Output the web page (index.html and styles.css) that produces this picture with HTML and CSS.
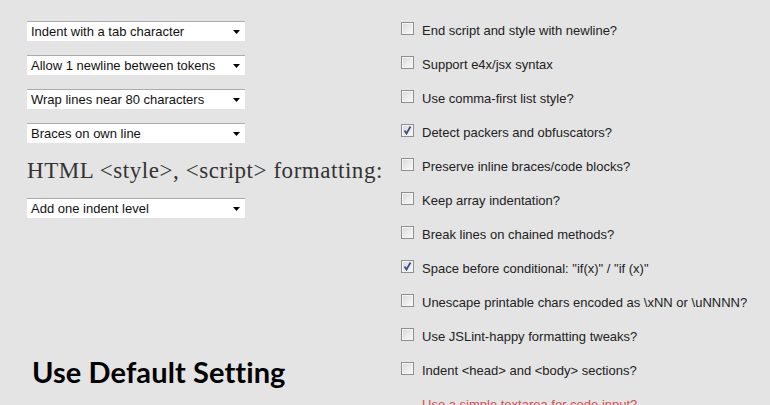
FILE: index.html
```html
<!DOCTYPE html>
<html>
<head>
<meta charset="utf-8">
<link rel="stylesheet" href="styles.css">
</head>
<body>
<div class="page">
  <div class="left">
    <div class="select"><span class="select-text">Indent with a tab character</span><svg class="arrow" width="7" height="4" viewBox="0 0 7 4"><polygon points="0,0 7,0 3.5,4" fill="#000"/></svg></div>
    <div class="select"><span class="select-text">Allow 1 newline between tokens</span><svg class="arrow" width="7" height="4" viewBox="0 0 7 4"><polygon points="0,0 7,0 3.5,4" fill="#000"/></svg></div>
    <div class="select"><span class="select-text">Wrap lines near 80 characters</span><svg class="arrow" width="7" height="4" viewBox="0 0 7 4"><polygon points="0,0 7,0 3.5,4" fill="#000"/></svg></div>
    <div class="select"><span class="select-text">Braces on own line</span><svg class="arrow" width="7" height="4" viewBox="0 0 7 4"><polygon points="0,0 7,0 3.5,4" fill="#000"/></svg></div>
    <h2 class="section-title">HTML &lt;style&gt;, &lt;script&gt; formatting:</h2>
    <div class="select"><span class="select-text">Add one indent level</span><svg class="arrow" width="7" height="4" viewBox="0 0 7 4"><polygon points="0,0 7,0 3.5,4" fill="#000"/></svg></div>
    <div class="default-setting">Use Default Setting</div>
  </div>
  <div class="right">
    <div class="option"><span class="checkbox"></span><span class="label">End script and style with newline?</span></div>
    <div class="option"><span class="checkbox"></span><span class="label">Support e4x/jsx syntax</span></div>
    <div class="option"><span class="checkbox"></span><span class="label">Use comma-first list style?</span></div>
    <div class="option"><span class="checkbox checked"><svg width="11" height="11" viewBox="0 0 11 11"><path d="M2.5 5.5 L4.5 8.5 L8.5 1.5" fill="none" stroke="#3d4f8c" stroke-width="1.8"/></svg></span><span class="label">Detect packers and obfuscators?</span></div>
    <div class="option"><span class="checkbox"></span><span class="label">Preserve inline braces/code blocks?</span></div>
    <div class="option"><span class="checkbox"></span><span class="label">Keep array indentation?</span></div>
    <div class="option"><span class="checkbox"></span><span class="label">Break lines on chained methods?</span></div>
    <div class="option"><span class="checkbox checked"><svg width="11" height="11" viewBox="0 0 11 11"><path d="M2.5 5.5 L4.5 8.5 L8.5 1.5" fill="none" stroke="#3d4f8c" stroke-width="1.8"/></svg></span><span class="label">Space before conditional: "if(x)" / "if (x)"</span></div>
    <div class="option"><span class="checkbox"></span><span class="label">Unescape printable chars encoded as \xNN or \uNNNN?</span></div>
    <div class="option"><span class="checkbox"></span><span class="label">Use JSLint-happy formatting tweaks?</span></div>
    <div class="option"><span class="checkbox"></span><span class="label">Indent &lt;head&gt; and &lt;body&gt; sections?</span></div>
    <div class="option"><span class="spacer"></span><span class="label link">Use a simple textarea for code input?</span></div>
  </div>
</div>
</body>
</html>
```

FILE: styles.css
```css
html, body {
  margin: 0;
  padding: 0;
  background: #e4e4e4;
  height: 100%;
  overflow: hidden;
}

.page {
  display: flex;
  padding-top: 21px;
  font-family: "Liberation Sans", Arial, sans-serif;
  font-size: 13px;
  color: #222;
}

.left {
  width: 401px;
  padding-left: 27px;
  box-sizing: border-box;
  display: flex;
  flex-direction: column;
  flex: none;
}

.select {
  width: 218px;
  height: 20px;
  box-sizing: border-box;
  background: #fff;
  border-top: 1px solid #aaa;
  display: flex;
  align-items: center;
  justify-content: space-between;
  padding: 0 5px 0 4px;
  margin-bottom: 14px;
  line-height: 19px;
  color: #111;
}

.select-text {
  white-space: nowrap;
}

.arrow {
  display: block;
  margin-top: 1px;
}

.section-title {
  margin: 2px 0 15px 0;
  padding: 0;
  font-family: "Liberation Serif", "Times New Roman", serif;
  font-weight: normal;
  font-size: 23px;
  letter-spacing: 0.55px;
  line-height: 24px;
  color: #333;
  white-space: nowrap;
}

.default-setting {
  margin-top: 123px;
  margin-left: 5px;
  font-family: Lato, "Open Sans", sans-serif;
  font-weight: 700;
  font-size: 29px;
  letter-spacing: 0.1px;
  line-height: 34px;
  color: #000;
  white-space: nowrap;
}

.right {
  display: flex;
  flex-direction: column;
}

.option {
  display: flex;
  align-items: flex-start;
  height: 20px;
  margin-bottom: 14px;
  line-height: 20px;
  white-space: nowrap;
}

.checkbox, .spacer {
  width: 13px;
  height: 13px;
  box-sizing: border-box;
  margin-top: 1px;
  margin-right: 8px;
  flex: none;
}

.checkbox {
  border: 1px solid #8f8f8f;
  background: linear-gradient(135deg, #d6d6d6 0%, #ececec 55%, #fafafa 100%);
  box-shadow: inset 0 0 0 1px #f4f4f4;
  display: flex;
  align-items: center;
  justify-content: center;
}

.checkbox svg {
  display: block;
}

.label {
  color: #222;
}

.label.link {
  color: #cf5252;
}
```
